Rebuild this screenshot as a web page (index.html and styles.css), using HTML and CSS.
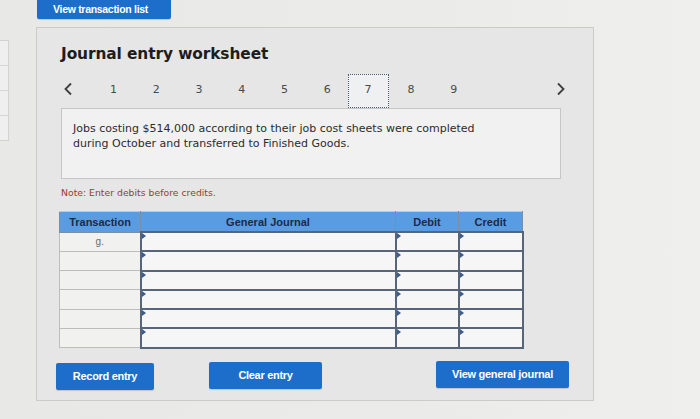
FILE: index.html
```html
<!DOCTYPE html>
<html lang="en">
<head>
<meta charset="utf-8">
<title>Journal entry worksheet</title>
<link rel="stylesheet" href="styles.css">
</head>
<body>
<div class="page">
  <div class="side">
    <div class="side-row"></div>
    <div class="side-row"></div>
    <div class="side-row"></div>
    <div class="side-row"></div>
  </div>
  <div class="main">
    <button class="btn top-btn">View transaction list</button>
    <section class="panel">
      <h1 class="title">Journal entry worksheet</h1>
      <nav class="pager">
        <span class="arrow prev"><svg width="10" height="14" viewBox="0 0 10 14"><path d="M8 1.5 L2.5 7 L8 12.5" fill="none" stroke="#3d3d3d" stroke-width="1.8"/></svg></span>
        <span class="num">1</span>
        <span class="num">2</span>
        <span class="num">3</span>
        <span class="num">4</span>
        <span class="num">5</span>
        <span class="num">6</span>
        <span class="num current">7</span>
        <span class="num">8</span>
        <span class="num">9</span>
        <span class="arrow next"><svg width="10" height="14" viewBox="0 0 10 14"><path d="M2 1.5 L7.5 7 L2 12.5" fill="none" stroke="#3d3d3d" stroke-width="1.8"/></svg></span>
      </nav>
      <div class="desc">Jobs costing $514,000 according to their job cost sheets were completed during October and transferred to Finished Goods.</div>
      <p class="note">Note: Enter debits before credits.</p>
      <table class="journal">
        <thead>
          <tr>
            <th class="c-tr">Transaction</th>
            <th class="c-gj">General Journal</th>
            <th class="c-dr">Debit</th>
            <th class="c-cr">Credit</th>
          </tr>
        </thead>
        <tbody>
          <tr><td class="tr">g.</td><td class="in"></td><td class="in"></td><td class="in"></td></tr>
          <tr><td class="tr"></td><td class="in"></td><td class="in"></td><td class="in"></td></tr>
          <tr><td class="tr"></td><td class="in"></td><td class="in"></td><td class="in"></td></tr>
          <tr><td class="tr"></td><td class="in"></td><td class="in"></td><td class="in"></td></tr>
          <tr><td class="tr"></td><td class="in"></td><td class="in"></td><td class="in"></td></tr>
          <tr><td class="tr"></td><td class="in"></td><td class="in"></td><td class="in"></td></tr>
        </tbody>
      </table>
      <div class="actions">
        <button class="btn record">Record entry</button>
        <button class="btn clear">Clear entry</button>
        <button class="btn view">View general journal</button>
      </div>
    </section>
  </div>
</div>
</body>
</html>
```

FILE: styles.css
```css
html, body {
  margin: 0;
  padding: 0;
}
body {
  width: 700px;
  height: 419px;
  overflow: hidden;
  background: linear-gradient(90deg, #e8e8e7 0%, #ebebea 60%, #efefee 100%);
  font-family: "DejaVu Sans", Verdana, sans-serif;
  color: #222;
}
.page {
  display: flex;
  align-items: flex-start;
}
.side {
  width: 8px;
  margin-top: 40px;
  display: flex;
  flex-direction: column;
  border: 1px solid #d2d2d2;
  border-left: none;
  background: #efefef;
}
.side-row {
  height: 24px;
  border-bottom: 1px solid #d6d6d6;
}
.side-row:last-child {
  border-bottom: none;
}
.main {
  margin-left: 27px;
  display: flex;
  flex-direction: column;
  align-items: flex-start;
}
.btn {
  border: none;
  background: #1d6ecb;
  color: #fff;
  font-family: "Liberation Sans", Arial, sans-serif;
  font-weight: bold;
  font-size: 10.5px;
  letter-spacing: -0.3px;
  padding: 0;
  border-radius: 2px;
  box-shadow: 0 1px 1px rgba(0,0,0,0.15);
}
.top-btn {
  margin-left: 1px;
  width: 134px;
  height: 19px;
  border-radius: 0 0 2px 2px;
  text-align: left;
  padding-left: 16px;
  line-height: 17px;
}
.panel {
  margin-top: 8px;
  width: 558px;
  height: 374px;
  box-sizing: border-box;
  border: 1px solid #cbcbcb;
  background: #e5e6e5;
  padding: 15px 24px 0 24px;
}
.title {
  margin: 0;
  font-size: 15.4px;
  line-height: 22px;
  font-weight: bold;
  color: #1d1d1d;
  letter-spacing: -0.1px;
}
.pager {
  margin-top: 9px;
  height: 34px;
  display: flex;
  align-items: center;
}
.arrow {
  width: 16px;
  display: flex;
  justify-content: center;
  align-items: center;
  height: 34px;
  margin-top: -4px;
}
.prev {
  margin-left: -1px;
  margin-right: 16px;
}
.next {
  margin-left: auto;
}
.num {
  width: 42.75px;
  height: 34px;
  box-sizing: border-box;
  display: flex;
  justify-content: center;
  align-items: center;
  font-size: 11px;
  color: #4a4a4a;
  padding-bottom: 4px;
}
.num.current {
  width: 41px;
  margin: 0 1px 0 -1px;
  border: 1.5px dotted #4f5b6e;
  background: #eef0f2;
}
.desc {
  width: 500px;
  height: 71px;
  box-sizing: border-box;
  border: 1px solid #c6c6c6;
  background: #f1f1f1;
  padding: 12px 70px 0 11px;
  font-size: 11px;
  line-height: 15px;
  color: #2c2c2c;
}
.note {
  margin: 8px 0 0 0;
  font-size: 9.3px;
  line-height: 12px;
  color: #9b3a3a;
}
.journal {
  margin: 12px 0 0 -2px;
  border-collapse: collapse;
  width: 459px;
  table-layout: fixed;
  font-family: "Liberation Sans", Arial, sans-serif;
}
.journal th {
  background: #5a9ce2;
  color: #1b2b48;
  font-size: 11px;
  font-weight: bold;
  height: 19px;
  padding: 0;
  border: 1px solid #7a8ea6;
  border-top-color: #c0c8d2;
  text-align: center;
}
.c-tr { width: 80px; }
.c-gj { width: 254px; }
.c-dr { width: 62px; }
.c-cr { width: 63px; }
.journal td {
  height: 17.3px;
  padding: 0;
  font-size: 10px;
}
.journal td.tr {
  background: #f1f1f0;
  border: 1px solid #bdbdbd;
  text-align: center;
  color: #6a6a6a;
}
.journal td.in {
  position: relative;
  background: #f6f6f6;
  border: 2px solid #56657a;
  border-top-width: 1px;
}
.journal tbody tr:first-child td.in {
  border-top-width: 2px;
}
.journal td.in::before {
  content: "";
  position: absolute;
  left: 0;
  top: 0;
  border-top: 3px solid transparent;
  border-bottom: 3px solid transparent;
  border-left: 4px solid #3b5c8c;
}
.actions {
  margin-top: 13px;
  display: flex;
  align-items: flex-start;
}
.actions .btn {
  height: 27px;
  font-size: 11px;
}
.record {
  width: 98px;
  margin-left: -5px;
  margin-top: 1px;
}
.clear {
  width: 113px;
  margin-left: 55px;
}
.view {
  width: 133px;
  margin-left: auto;
  margin-top: -1px;
}
```
